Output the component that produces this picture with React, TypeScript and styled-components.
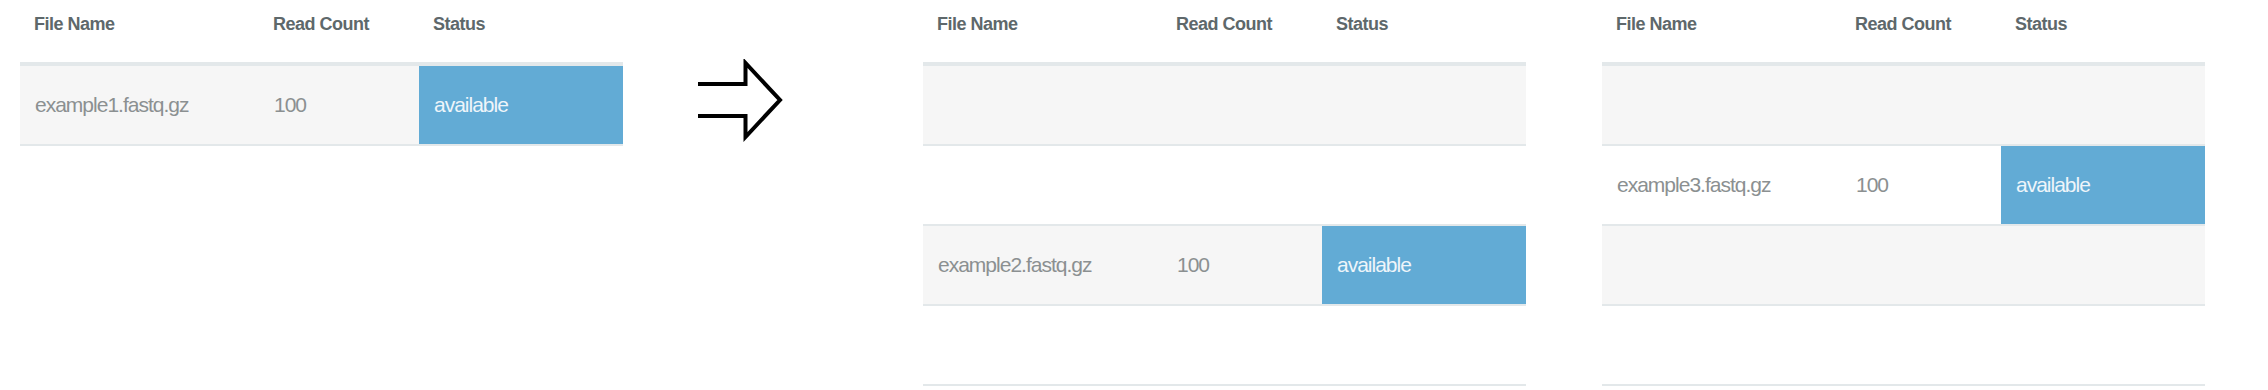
import React from "react";
import styled, { createGlobalStyle } from "styled-components";

const GlobalStyle = createGlobalStyle`
    html, body {
        margin: 0;
        padding: 0;
        background: #ffffff;
    }
    body {
        font-family: "Liberation Sans", Arial, Helvetica, sans-serif;
    }
`

type FileRow = { name: string, count: number, status: string } | null

const Page = styled.div`
    display: flex;
    align-items: flex-start;
    padding-left: 20px;
    width: 2268px;
    height: 390px;
    box-sizing: border-box;
`

const Table = styled.div<{ gapAfter?: number }>`
    display: grid;
    grid-template-columns: 239px 160px 204px;
    width: 603px;
    flex-shrink: 0;
    margin-right: ${props => props.gapAfter ? `${props.gapAfter}px` : "0"};
`

const HeadCell = styled.div`
    height: 66px;
    box-sizing: border-box;
    padding: 12px 14px 0;
    font-size: 18px;
    letter-spacing: -0.5px;
    line-height: 25px;
    font-weight: 700;
    color: #5e686b;
    border-bottom: 4px solid #e3e8ea;
    white-space: nowrap;
`

const Cell = styled.div<{ striped?: boolean, status?: boolean }>`
    height: 80px;
    box-sizing: border-box;
    display: flex;
    align-items: center;
    padding: 0 14px 0 15px;
    font-size: 21px;
    letter-spacing: -1px;
    color: ${props => props.status ? "#eef5fa" : "#8b9091"};
    background: ${props => props.status ? "#62abd5" : props.striped ? "#f6f6f6" : "#ffffff"};
    border-bottom: 2px solid #e3e8ea;
    white-space: nowrap;
`

const ArrowWrap = styled.div`
    margin: 59px 136px 0 72px;
    width: 92px;
    height: 84px;
    flex-shrink: 0;
`

const ArrowIcon = () => (
    <ArrowWrap>
        <svg width="92" height="84" viewBox="0 0 92 84">
            <path
                d="M3 25 H50.5 V4 L85 41 L50.5 78 V57 H3"
                fill="none"
                stroke="#000"
                strokeWidth="4"
                strokeLinejoin="miter"
            />
        </svg>
    </ArrowWrap>
)

const FileTable = ({ rows, gapAfter }: { rows: FileRow[], gapAfter?: number }) => (
    <Table gapAfter={gapAfter}>
        <HeadCell>File Name</HeadCell>
        <HeadCell>Read Count</HeadCell>
        <HeadCell>Status</HeadCell>
        {rows.map((row, i) => {
            const striped = i % 2 === 0
            return (
                <React.Fragment key={i}>
                    <Cell striped={striped}>{row ? row.name : ""}</Cell>
                    <Cell striped={striped}>{row ? row.count : ""}</Cell>
                    <Cell striped={striped} status={!!row}>{row ? row.status : ""}</Cell>
                </React.Fragment>
            )
        })}
    </Table>
)

export default function App() {
    return (
        <>
            <GlobalStyle />
            <Page>
                <FileTable rows={[{ name: "example1.fastq.gz", count: 100, status: "available" }]} />
                <ArrowIcon />
                <FileTable
                    gapAfter={76}
                    rows={[null, null, { name: "example2.fastq.gz", count: 100, status: "available" }, null]}
                />
                <FileTable
                    rows={[null, { name: "example3.fastq.gz", count: 100, status: "available" }, null, null]}
                />
            </Page>
        </>
    )
}
